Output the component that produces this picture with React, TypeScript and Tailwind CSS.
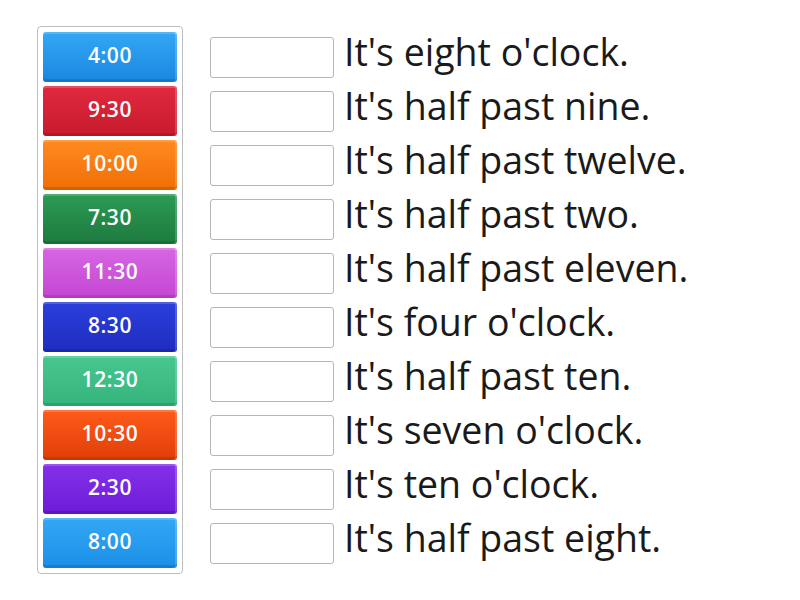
const tiles = [
  { label: "4:00", cls: "from-[#33a7f5] to-[#1a87e0]" },
  { label: "9:30", cls: "from-[#e0293f] to-[#c81a2c]" },
  { label: "10:00", cls: "from-[#ff8a1e] to-[#f06f05]" },
  { label: "7:30", cls: "from-[#2c9b55] to-[#1d7a3f]" },
  { label: "11:30", cls: "from-[#d666e2] to-[#c545d3]" },
  { label: "8:30", cls: "from-[#2b3fdc] to-[#1f2dc0]" },
  { label: "12:30", cls: "from-[#48c690] to-[#34b57c]" },
  { label: "10:30", cls: "from-[#ff5a1a] to-[#e03e06]" },
  { label: "2:30", cls: "from-[#8430ea] to-[#6d1bd6]" },
  { label: "8:00", cls: "from-[#33a7f5] to-[#1a8fe6]" },
];

const sentences = [
  "It's eight o'clock.",
  "It's half past nine.",
  "It's half past twelve.",
  "It's half past two.",
  "It's half past eleven.",
  "It's four o'clock.",
  "It's half past ten.",
  "It's seven o'clock.",
  "It's ten o'clock.",
  "It's half past eight.",
];

export default function App() {
  return (
    <div className="w-[800px] h-[600px] bg-white pt-[26px] pl-[37px] flex items-start font-['Open_Sans',sans-serif]">
      <div className="w-[146px] border border-[#bdbdbd] rounded-[4px] p-[5px] flex flex-col gap-[4px]">
        {tiles.map((t) => (
          <div
            key={t.label}
            className={`h-[50px] pb-[4px] rounded-[3px] bg-linear-to-b ${t.cls} flex items-center justify-center text-white text-[21px] font-semibold tracking-[0.6px] leading-none shadow-[inset_0_-3px_0_rgba(0,0,0,0.12),inset_-2px_0_0_rgba(255,255,255,0.18),inset_0_2px_0_rgba(255,255,255,0.18)]`}
          >
            {t.label}
          </div>
        ))}
      </div>
      <div className="ml-[27px] pt-[6px] flex flex-col gap-[4px]">
        {sentences.map((s) => (
          <div key={s} className="h-[50px] flex items-center">
            <div className="w-[124px] h-[41px] border border-[#b5b5b5] rounded-[3px] bg-white" />
            <span className="ml-[10px] mb-[10px] text-[37.5px] text-[#1a1a1a] leading-none whitespace-nowrap">
              {s}
            </span>
          </div>
        ))}
      </div>
    </div>
  );
}
